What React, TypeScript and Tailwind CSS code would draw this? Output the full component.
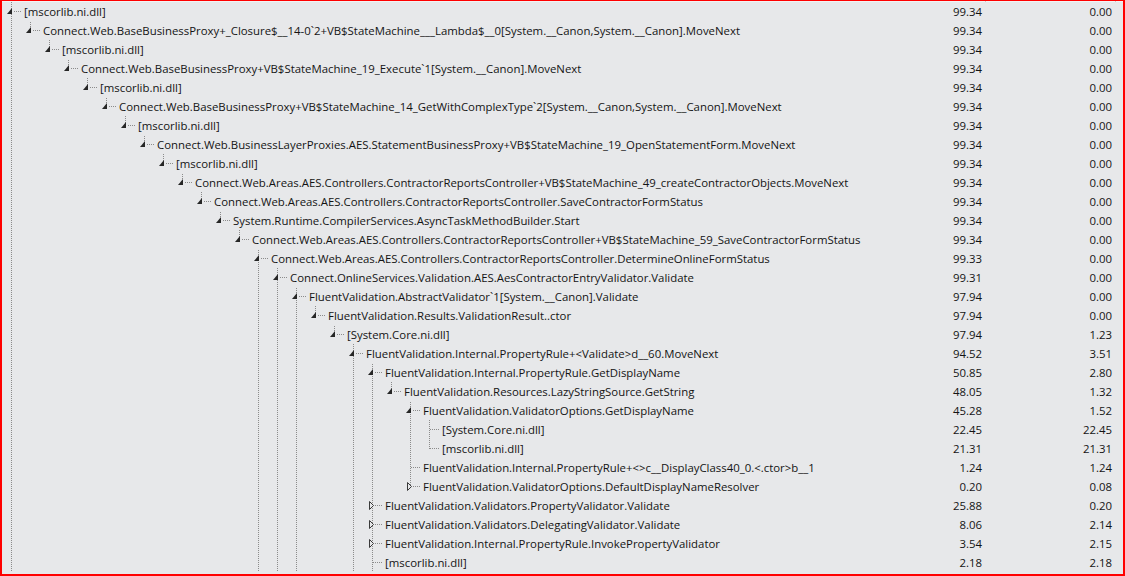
import React from 'react'

type Kind = 'open' | 'closed' | 'leaf'

interface Row {
  level: number
  name: string
  incl: string
  excl: string
  kind: Kind
}

const rows: Row[] = [
  { level: 0, name: '[mscorlib.ni.dll]', incl: '99.34', excl: '0.00', kind: 'open' },
  { level: 1, name: 'Connect.Web.BaseBusinessProxy+_Closure$__14-0`2+VB$StateMachine___Lambda$__0[System.__Canon,System.__Canon].MoveNext', incl: '99.34', excl: '0.00', kind: 'open' },
  { level: 2, name: '[mscorlib.ni.dll]', incl: '99.34', excl: '0.00', kind: 'open' },
  { level: 3, name: 'Connect.Web.BaseBusinessProxy+VB$StateMachine_19_Execute`1[System.__Canon].MoveNext', incl: '99.34', excl: '0.00', kind: 'open' },
  { level: 4, name: '[mscorlib.ni.dll]', incl: '99.34', excl: '0.00', kind: 'open' },
  { level: 5, name: 'Connect.Web.BaseBusinessProxy+VB$StateMachine_14_GetWithComplexType`2[System.__Canon,System.__Canon].MoveNext', incl: '99.34', excl: '0.00', kind: 'open' },
  { level: 6, name: '[mscorlib.ni.dll]', incl: '99.34', excl: '0.00', kind: 'open' },
  { level: 7, name: 'Connect.Web.BusinessLayerProxies.AES.StatementBusinessProxy+VB$StateMachine_19_OpenStatementForm.MoveNext', incl: '99.34', excl: '0.00', kind: 'open' },
  { level: 8, name: '[mscorlib.ni.dll]', incl: '99.34', excl: '0.00', kind: 'open' },
  { level: 9, name: 'Connect.Web.Areas.AES.Controllers.ContractorReportsController+VB$StateMachine_49_createContractorObjects.MoveNext', incl: '99.34', excl: '0.00', kind: 'open' },
  { level: 10, name: 'Connect.Web.Areas.AES.Controllers.ContractorReportsController.SaveContractorFormStatus', incl: '99.34', excl: '0.00', kind: 'open' },
  { level: 11, name: 'System.Runtime.CompilerServices.AsyncTaskMethodBuilder.Start', incl: '99.34', excl: '0.00', kind: 'open' },
  { level: 12, name: 'Connect.Web.Areas.AES.Controllers.ContractorReportsController+VB$StateMachine_59_SaveContractorFormStatus', incl: '99.34', excl: '0.00', kind: 'open' },
  { level: 13, name: 'Connect.Web.Areas.AES.Controllers.ContractorReportsController.DetermineOnlineFormStatus', incl: '99.33', excl: '0.00', kind: 'open' },
  { level: 14, name: 'Connect.OnlineServices.Validation.AES.AesContractorEntryValidator.Validate', incl: '99.31', excl: '0.00', kind: 'open' },
  { level: 15, name: 'FluentValidation.AbstractValidator`1[System.__Canon].Validate', incl: '97.94', excl: '0.00', kind: 'open' },
  { level: 16, name: 'FluentValidation.Results.ValidationResult..ctor', incl: '97.94', excl: '0.00', kind: 'open' },
  { level: 17, name: '[System.Core.ni.dll]', incl: '97.94', excl: '1.23', kind: 'open' },
  { level: 18, name: 'FluentValidation.Internal.PropertyRule+<Validate>d__60.MoveNext', incl: '94.52', excl: '3.51', kind: 'open' },
  { level: 19, name: 'FluentValidation.Internal.PropertyRule.GetDisplayName', incl: '50.85', excl: '2.80', kind: 'open' },
  { level: 20, name: 'FluentValidation.Resources.LazyStringSource.GetString', incl: '48.05', excl: '1.32', kind: 'open' },
  { level: 21, name: 'FluentValidation.ValidatorOptions.GetDisplayName', incl: '45.28', excl: '1.52', kind: 'open' },
  { level: 22, name: '[System.Core.ni.dll]', incl: '22.45', excl: '22.45', kind: 'leaf' },
  { level: 22, name: '[mscorlib.ni.dll]', incl: '21.31', excl: '21.31', kind: 'leaf' },
  { level: 21, name: 'FluentValidation.Internal.PropertyRule+<>c__DisplayClass40_0.<.ctor>b__1', incl: '1.24', excl: '1.24', kind: 'leaf' },
  { level: 21, name: 'FluentValidation.ValidatorOptions.DefaultDisplayNameResolver', incl: '0.20', excl: '0.08', kind: 'closed' },
  { level: 19, name: 'FluentValidation.Validators.PropertyValidator.Validate', incl: '25.88', excl: '0.20', kind: 'closed' },
  { level: 19, name: 'FluentValidation.Validators.DelegatingValidator.Validate', incl: '8.06', excl: '2.14', kind: 'closed' },
  { level: 19, name: 'FluentValidation.Internal.PropertyRule.InvokePropertyValidator', incl: '3.54', excl: '2.15', kind: 'closed' },
  { level: 19, name: '[mscorlib.ni.dll]', incl: '2.18', excl: '2.18', kind: 'leaf' },
]

// rows scrolled out of view below, only used so the guide lines keep going
const levels = [...rows.map(r => r.level), 19, 18, 15, 14, 13, 0]

function continues(i: number, k: number) {
  for (let j = i + 1; j < levels.length; j++) {
    if (levels[j] < k) return false
    if (levels[j] === k) return true
  }
  return false
}

const LINE = '#8b8b8b'
const BG = '#e7e8ea'

function Guides({ i, row }: { i: number; row: Row }) {
  const L = row.level
  const w = 22 + 19 * L
  const cx = 9 + 19 * L
  const off = i % 2
  const vx = (k: number) => 9 + 19 * k + 0.5

  const ancestors = []
  for (let k = 0; k < L; k++) {
    if (continues(i, k)) {
      ancestors.push(
        <line key={k} x1={vx(k)} x2={vx(k)} y1={0} y2={19} stroke={LINE} strokeDasharray="1 1" strokeDashoffset={off} />
      )
    }
  }

  return (
    <svg width={w} height={19} className="shrink-0" shapeRendering="crispEdges">
      {ancestors}
      <line x1={cx + 0.5} x2={cx + 0.5} y1={0} y2={continues(i, L) ? 19 : 10} stroke={LINE} strokeDasharray="1 1" strokeDashoffset={off} />
      <line
        x1={row.kind === 'leaf' ? cx + 1 : cx + 3}
        x2={cx + 11}
        y1={9.5}
        y2={9.5}
        stroke={LINE}
        strokeDasharray="1 1"
      />
      {row.kind === 'open' && <polygon points={`${cx + 1},6 ${cx + 1},12 ${cx - 4},12`} fill="#262626" shapeRendering="geometricPrecision" />}
      {row.kind === 'closed' && (
        <polygon
          points={`${cx - 2.5},5.5 ${cx - 2.5},13.5 ${cx + 1.5},9.5`}
          fill={BG}
          stroke="#3a3a3a"
          strokeWidth={1}
          shapeRendering="geometricPrecision"
        />
      )}
    </svg>
  )
}

export default function App() {
  return (
    <div className="h-[576px] w-[1125px] overflow-hidden border-2 border-t border-[#ff0000] bg-[#e7e8ea] font-['Open_Sans',sans-serif] text-[11.4px] text-[#141414]">
      {/* header edge */}
      <div className="flex h-px bg-[#f3f3f4]">
        <div className="flex-1" />
        <div className="w-[130px] border-l border-[#c9c9c9]" />
        <div className="w-[8px] border-l border-[#c9c9c9]" />
      </div>

      {rows.map((row, i) => (
        <div key={i} className="flex h-[19px] items-center leading-[19px]">
          <div className="flex min-w-0 flex-1 items-center overflow-hidden whitespace-nowrap">
            <Guides i={i} row={row} />
            <span>{row.name}</span>
          </div>
          <div className="w-[80px] pr-[3px] text-right">{row.incl}</div>
          <div className="w-[130px] pr-[3px] text-right">{row.excl}</div>
          <div className="w-[8px]" />
        </div>
      ))}
    </div>
  )
}
